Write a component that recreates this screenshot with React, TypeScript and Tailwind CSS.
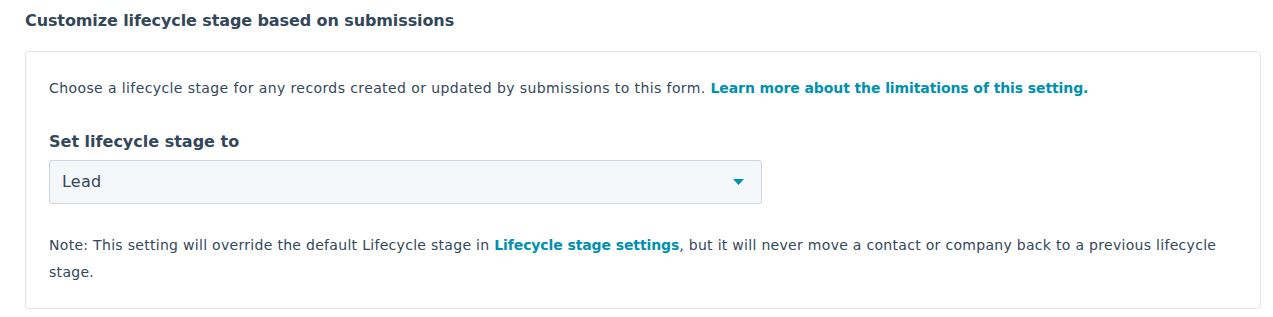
export default function App() {
  return (
    <div className="w-[1273px] h-[317px] bg-white pl-[25px] pr-[12px] pt-[11px] text-[#33475b] font-['DejaVu_Sans',sans-serif]">
      <h2 className="text-[16px] leading-[20px] font-bold tracking-[-0.1px]">Customize lifecycle stage based on submissions</h2>
      <div className="mt-[20px] border border-[#dfe3eb] rounded-[4px] px-[23px] pt-[23px] pb-[22px]">
        <p className="text-[14px] leading-[26px] tracking-[0.4px]">
          Choose a lifecycle stage for any records created or updated by submissions to this form.{" "}
          <a className="font-bold text-[#0091ae] tracking-[-0.1px]">Learn more about the limitations of this setting.</a>
        </p>
        <div className="mt-[31px] text-[16px] leading-[20px] font-bold">Set lifecycle stage to</div>
        <div className="mt-[8px] w-[713px] h-[44px] bg-[#f5f8fa] border border-[#cbd6e2] rounded-[3px] flex items-center justify-between pl-[12px] pr-[17px]">
          <span className="text-[16px] tracking-[0.2px]">Lead</span>
          <svg width="11" height="6" viewBox="0 0 11 6"><path d="M0 0 L11 0 L5.5 6 Z" fill="#0091ae" /></svg>
        </div>
        <p className="mt-[28px] text-[14px] leading-[27px] tracking-[0.3px]">
          Note: This setting will override the default Lifecycle stage in{" "}
          <a className="font-bold text-[#0091ae] tracking-[-0.1px]">Lifecycle stage settings</a>, but it will never move a contact or company back to a previous lifecycle stage.
        </p>
      </div>
    </div>
  );
}
